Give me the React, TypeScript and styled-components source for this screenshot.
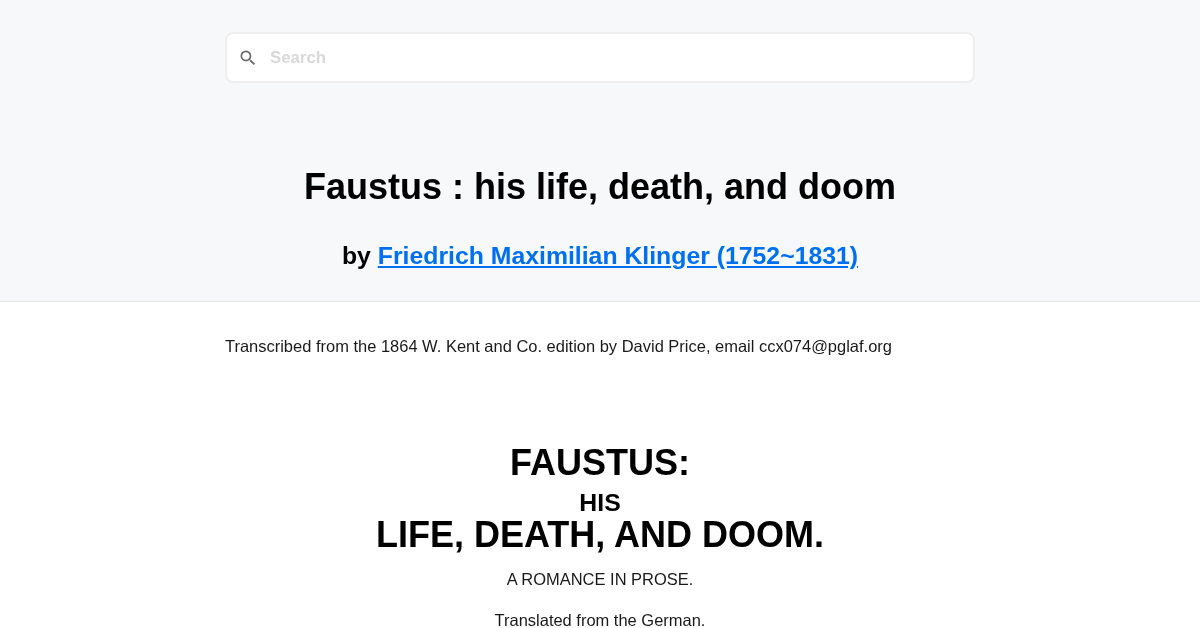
import React from 'react';
import styled, {createGlobalStyle} from 'styled-components';

const GlobalStyle = createGlobalStyle`
  html, body {
    margin: 0;
    padding: 0;
    background: #fff;
    font-family: "Liberation Sans", Arial, sans-serif;
    color: #1a1a1a;
  }
`

const Page = styled.div`
  will-change: transform;
`

const Header = styled.header`
  background-color: #f7f8fa;
  border-bottom: 1px solid #e3e4e8;
  padding: 32px 0 29px;
  text-align: center;
`

const SearchBox = styled.form`
  width: 750px;
  height: 51px;
  box-sizing: border-box;
  margin: 0 auto;
  display: flex;
  align-items: center;
  gap: 12px;
  padding: 0 11px;
  background: white;
  border: 2px solid #eeeeef;
  border-radius: 8px;
`

const SearchInput = styled.input`
  flex: 1;
  border: 0;
  outline: 0;
  padding: 0;
  background: transparent;
  font: bold 16.8px "Liberation Sans", Arial, sans-serif;
  color: #1a1a1a;

  &::placeholder {
    color: #d8d8d8;
    opacity: 1;
  }
`

const BookTitle = styled.h1`
  margin: 82px 0 0;
  font-size: 36px;
  line-height: 44px;
  font-weight: bold;
  color: #000;
`

const Byline = styled.h2`
  margin: 31px 0 0;
  font-size: 24.8px;
  line-height: 32px;
  font-weight: bold;
  color: #000;

  > a {
    color: #0070f0;
  }
`

const Content = styled.main`
  width: 750px;
  margin: 0 auto;
  font-size: 16.48px;
`

const Credit = styled.p`
  margin: 0;
  padding-top: 34px;
  line-height: 20px;
`

const TitlePage = styled.section`
  margin-top: 89px;
  text-align: center;
`

const Heading = styled.div`
  font-weight: bold;
  color: #000;
  font-size: 36px;
  line-height: 36px;
`

const SubHeading = styled.div`
  margin-top: 8px;
  font-weight: bold;
  color: #000;
  font-size: 24.8px;
  line-height: 28px;
`

const Line = styled.p`
  margin: 16px 0 0;
  line-height: 20px;

  & + & {
    margin-top: 21px;
  }
`

const SearchIcon = () => <svg width="20" height="20" viewBox="0 0 24 24" fill="#666">
  <path d="M15.5 14h-.79l-.28-.27A6.47 6.47 0 0 0 16 9.5 6.5 6.5 0 1 0 9.5 16c1.61 0 3.09-.59 4.23-1.57l.27.28v.79l5 4.99L20.49 19l-4.99-5zm-6 0C7.01 14 5 11.99 5 9.5S7.01 5 9.5 5 14 7.01 14 9.5 11.99 14 9.5 14z"/>
</svg>

export default function App() {
  return <Page>
    <GlobalStyle/>
    <Header>
      <SearchBox>
        <SearchIcon/>
        <SearchInput placeholder="Search"/>
      </SearchBox>
      <BookTitle>Faustus : his life, death, and doom</BookTitle>
      <Byline>by <a href="#">Friedrich Maximilian Klinger (1752~1831)</a></Byline>
    </Header>
    <Content>
      <Credit>Transcribed from the 1864 W. Kent and Co. edition by David Price, email ccx074@pglaf.org</Credit>
      <TitlePage>
        <Heading>FAUSTUS:</Heading>
        <SubHeading>HIS</SubHeading>
        <Heading>LIFE, DEATH, AND DOOM.</Heading>
        <Line>A ROMANCE IN PROSE.</Line>
        <Line>Translated from the German.</Line>
      </TitlePage>
    </Content>
  </Page>
}
